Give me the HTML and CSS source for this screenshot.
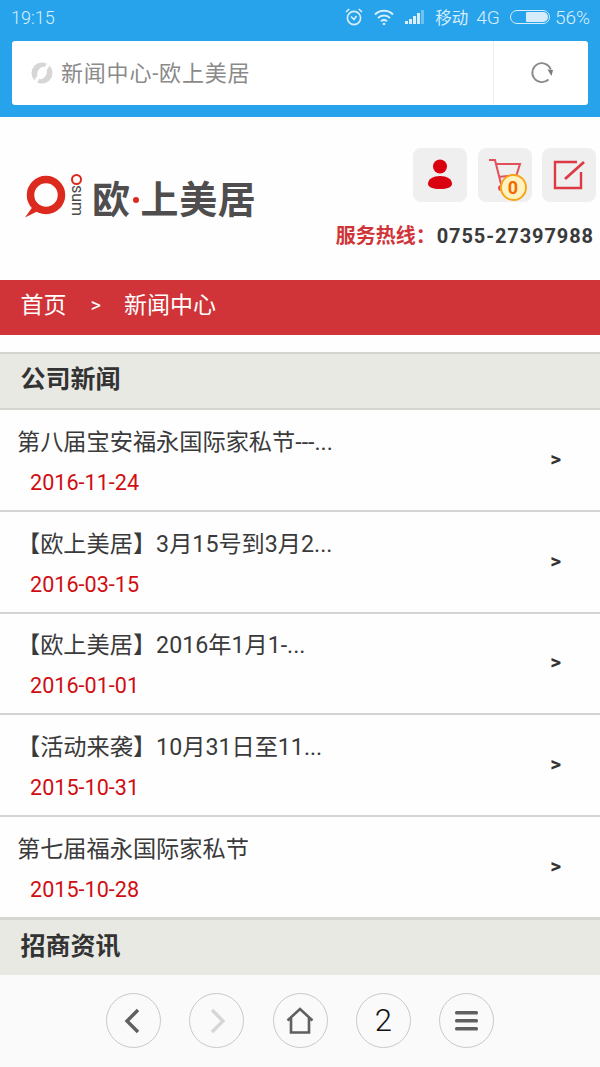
FILE: index.html
```html
<!DOCTYPE html>
<html lang="zh-CN">
<head>
<meta charset="utf-8">
<title>新闻中心-欧上美居</title>
<link rel="stylesheet" href="styles.css">
</head>
<body>
<div class="app">
  <div class="chrome">
    <div class="status">
      <span class="time">19:15</span>
      <div class="status-right">
        <svg class="ic-alarm" width="20" height="20" viewBox="0 0 20 20" fill="none" stroke="#d9eefc" stroke-width="1.6"><circle cx="10" cy="11" r="6.6"/><path d="M7 9.5l3 3 2.5-3.5M2 5l3.2-3M18 5l-3.200-3"/></svg>
        <svg class="ic-wifi" width="22" height="18" viewBox="0 0 22 18" fill="none" stroke="#d9eefc" stroke-width="2"><path d="M2 6.500c5-5 13-5 18 0M5 10c3.300-3.200 8.700-3.200 12 0M8 13.200c1.700-1.500 4.300-1.500 6 0"/><circle cx="11" cy="16" r="1.300" fill="#d9eefc" stroke="none"/></svg>
        <svg class="ic-signal" width="20" height="14" viewBox="0 0 20 14" fill="#d9eefc"><rect x="0" y="11" width="3" height="3"/><rect x="4" y="9" width="3" height="5"/><rect x="8" y="6" width="3" height="8"/><rect x="12" y="3" width="3" height="11"/><rect x="16" y="0" width="3" height="14" opacity=".4"/></svg>
        <span class="st-cn">移动</span>
        <span class="st-text">4G</span>
        <span class="battery"><span class="battery-fill"></span></span>
        <span class="st-text">56%</span>
      </div>
    </div>
    <div class="address">
      <div class="address-title">
        <svg class="site-ic" width="22" height="22" viewBox="0 0 22 22"><circle cx="11" cy="11" r="10.500" fill="#d6d6d6"/><ellipse cx="11" cy="11" rx="4.500" ry="6.500" transform="rotate(25 11 11)" fill="#fff"/><path d="M13 6l4-6 3 1-4 7zM9 16l-4 6-3-1 4-7z" fill="#fff"/></svg>
        <span class="address-text">新闻中心-欧上美居</span>
      </div>
      <div class="reload">
        <svg width="26" height="26" viewBox="0 0 26 26" fill="none" stroke="#8a8a8a" stroke-width="1.800"><path d="M19.500 19.500A9.500 9.500 0 1 1 21.800 9.500"/><path d="M18.500 9.500l5.500.5-1.500 6z" fill="#7a7a7a" stroke="none"/></svg>
      </div>
    </div>
  </div>

  <main class="page">
    <header class="site-header">
      <div class="logo">
        <svg class="logo-mark" width="44" height="44" viewBox="0 0 44 44"><circle cx="22" cy="20" r="15.500" fill="none" stroke="#dc2a1e" stroke-width="7.500"/><path d="M1 42.500L12 27l6 7z" fill="#dc2a1e"/></svg>
        <div class="logo-osum"><span class="logo-o"></span><span class="logo-sum">sum</span></div>
        <span class="logo-text">欧<i class="logo-dot"></i>上美居</span>
      </div>
      <div class="header-right">
        <div class="tools">
          <a class="tool">
            <svg width="28" height="32" viewBox="0 0 28 32" fill="#d9000f"><circle cx="14" cy="7.500" r="7"/><path d="M2 25c0-5 5-8 12-8s12 3 12 8c0 3-5 5-12 5S2 28 2 25z"/></svg>
          </a>
          <a class="tool">
            <svg width="36" height="36" viewBox="0 0 36 36" fill="none" stroke="#e2505a" stroke-width="2"><path d="M2 3h6l6 24h15M9 7h24l-3.500 11-18 2"/><circle cx="14" cy="31" r="2"/><circle cx="27" cy="31" r="2"/></svg>
            <span class="badge">0</span>
          </a>
          <a class="tool">
            <svg width="34" height="32" viewBox="0 0 34 32" fill="none" stroke="#dc3a44" stroke-width="2.400"><path d="M25 3H3v26h26V13"/><path d="M13 20L32 3" stroke-width="2.800"/></svg>
          </a>
        </div>
        <div class="hotline"><span class="hot-label">服务热线：</span><span class="hot-num">0755-27397988</span></div>
      </div>
    </header>

    <nav class="crumbs"><span>首页</span><span class="crumb-sep">&gt;</span><span>新闻中心</span></nav>

    <section class="news">
      <h2 class="sec-title">公司新闻</h2>
      <a class="item"><div class="item-body"><div class="item-title">第八届宝安福永国际家私节---...</div><div class="item-date">2016-11-24</div></div><span class="arrow">&gt;</span></a>
      <a class="item"><div class="item-body"><div class="item-title">【欧上美居】3月15号到3月2...</div><div class="item-date">2016-03-15</div></div><span class="arrow">&gt;</span></a>
      <a class="item"><div class="item-body"><div class="item-title">【欧上美居】2016年1月1-...</div><div class="item-date">2016-01-01</div></div><span class="arrow">&gt;</span></a>
      <a class="item"><div class="item-body"><div class="item-title">【活动来袭】10月31日至11...</div><div class="item-date">2015-10-31</div></div><span class="arrow">&gt;</span></a>
      <a class="item"><div class="item-body"><div class="item-title">第七届福永国际家私节</div><div class="item-date">2015-10-28</div></div><span class="arrow">&gt;</span></a>
      <h2 class="sec-title sec-title-second">招商资讯</h2>
    </section>
  </main>

  <footer class="bottom-nav">
    <a class="round"><svg width="20" height="28" viewBox="0 0 20 28" fill="none" stroke="#606060" stroke-width="3.400"><path d="M15 3L4 14l11 11"/></svg></a>
    <a class="round"><svg width="20" height="28" viewBox="0 0 20 28" fill="none" stroke="#d6d6d6" stroke-width="3.400"><path d="M5 3l11 11L5 25"/></svg></a>
    <a class="round"><svg width="28" height="28" viewBox="0 0 28 28" fill="none" stroke="#606060" stroke-width="2.600"><path d="M1.500 13.500L14 2l12.500 11.500M5 11v14.500h18V11"/></svg></a>
    <a class="round round-num">2</a>
    <a class="round"><svg width="24" height="22" viewBox="0 0 24 22" fill="#606060"><rect x="0" y="1" width="23" height="3.400" rx="1.500"/><rect x="0" y="9" width="23" height="3.400" rx="1.500"/><rect x="0" y="17" width="23" height="3.400" rx="1.500"/></svg></a>
  </footer>
</div>
</body>
</html>
```
FILE: styles.css
```css
* { box-sizing: border-box; }
html, body { margin: 0; padding: 0; }
body { font-family: Roboto, "Noto Sans CJK SC", sans-serif; background: #fff; }
a { color: inherit; text-decoration: none; }

.app { width: 600px; height: 1067px; display: flex; flex-direction: column; overflow: hidden; }

.chrome { height: 117px; flex: none; background: #27a3ec; padding: 0 12px; }
.status { height: 41px; display: flex; align-items: center; justify-content: space-between; color: #d9eefc; padding-bottom: 7px; margin-left: -1px; }
.time { font-size: 18px; font-weight: 300; }
.status-right { display: flex; align-items: center; gap: 10px; margin-right: -2px; }
.st-cn { font-size: 16.500px; margin-right: -2px; }
.st-text { font-size: 19px; font-weight: 300; }
.ic-alarm { margin-right: -1px; }
.battery { width: 40px; height: 14px; border: 1.500px solid #d9eefc; border-radius: 7px; display: flex; justify-content: flex-end; padding: 1px; margin: 0 -5px 0 0; }
.battery-fill { width: 22px; background: #d6ecfb; border-radius: 1px 5px 5px 1px; }

.address { height: 64px; background: #fff; border-radius: 3px; display: flex; align-items: center; }
.address-title { flex: 1; display: flex; align-items: center; gap: 8px; padding-left: 19px; color: #8a8a8a; height: 100%; }
.address-text { font-size: 22px; letter-spacing: .8px; margin-top: -5px; }
.reload { width: 95px; height: 100%; border-left: 1px solid #eee; display: flex; align-items: center; justify-content: center; padding-left: 2px; }

.page { flex: 1; min-height: 0; overflow: hidden; background: #fefefe; }

.site-header { height: 163px; display: flex; justify-content: space-between; }
.logo { display: flex; align-items: center; padding-left: 24px; margin-top: 14px; height: 134px; }
.logo-mark { flex: none; margin-top: -2px; }
.logo-osum { width: 17px; height: 44px; display: flex; flex-direction: column; align-items: center; margin-top: -4px; }
.logo-o { width: 11px; height: 11px; border: 2.500px solid #dc2a1e; border-radius: 50%; flex: none; }
.logo-sum { writing-mode: vertical-rl; font-size: 16px; line-height: 12px; color: #4a4a4a; }
.logo-text { font-size: 38px; line-height: 40px; font-weight: 700; letter-spacing: .6px; color: #4f4d4d; display: flex; align-items: center; margin-left: 7px; margin-top: 4px; white-space: nowrap; }
.logo-dot { width: 6px; height: 6px; border-radius: 50%; background: #dc2a1e; margin: 0 2px; }

.header-right { display: flex; flex-direction: column; align-items: flex-end; padding: 31px 7px 0 0; }
.tools { display: flex; gap: 10.500px; margin-right: -3px; }
.tool { position: relative; width: 54px; height: 54px; background: #efefef; border-radius: 8px; display: flex; align-items: center; justify-content: center; }
.badge { position: absolute; left: 22px; top: 26px; width: 27px; height: 27px; border-radius: 50%; background: #fdf3c0; border: 2px solid #f9a51a; color: #f26a00; font-size: 18px; font-weight: 700; display: flex; align-items: center; justify-content: center; }
.hotline { margin: 20px -1px 0 0; font-size: 20px; font-weight: 700; line-height: 28px; white-space: nowrap; }
.hot-label { color: #d03438; margin-right: 1px; }
.hot-num { color: #3a3a3a; letter-spacing: .9px; }

.crumbs { height: 55px; background: #d03438; color: #fff; font-size: 23px; display: flex; align-items: center; padding: 0 0 9px 20.500px; }
.crumb-sep { font-size: 20px; margin: 0 23px 0 24px; padding-top: 3px; }

.news { padding-top: 17px; }
.sec-title { margin: 0; height: 58px; background: #e9e9e4; border-top: 2px solid #d4d4d0; border-bottom: 2px solid #d4d4d0; color: #333; font-size: 25px; font-weight: 700; display: flex; align-items: center; padding: 0 0 8px 20.500px; }
.item { height: 101.800px; border-bottom: 2px solid #d4d4d4; display: flex; align-items: center; padding: 0 39px 0 17px; }
.item-body { flex: 1; }
.item-title { font-size: 23.200px; line-height: 32px; color: #3a3a3a; margin-top: 3px; }
.item-date { font-size: 21.600px; line-height: 28px; color: #d00d12; padding: 11px 0 0 13px; }
.arrow { font-size: 21px; font-weight: 700; color: #333; margin-top: -2px; }
.sec-title-second { height: 57px; border-bottom: none; border-top-width: 2px; margin-top: -1px; padding-bottom: 7px; }

.bottom-nav { height: 92px; flex: none; background: #fafafa; display: flex; justify-content: center; gap: 28.300px; padding-top: 18px; }
.round { width: 55px; height: 55px; border: 1px solid #c9c9c9; border-radius: 50%; display: flex; align-items: center; justify-content: center; }
.round-num { font-size: 31px; color: #111; font-family: Roboto, sans-serif; font-weight: 300; }
```
